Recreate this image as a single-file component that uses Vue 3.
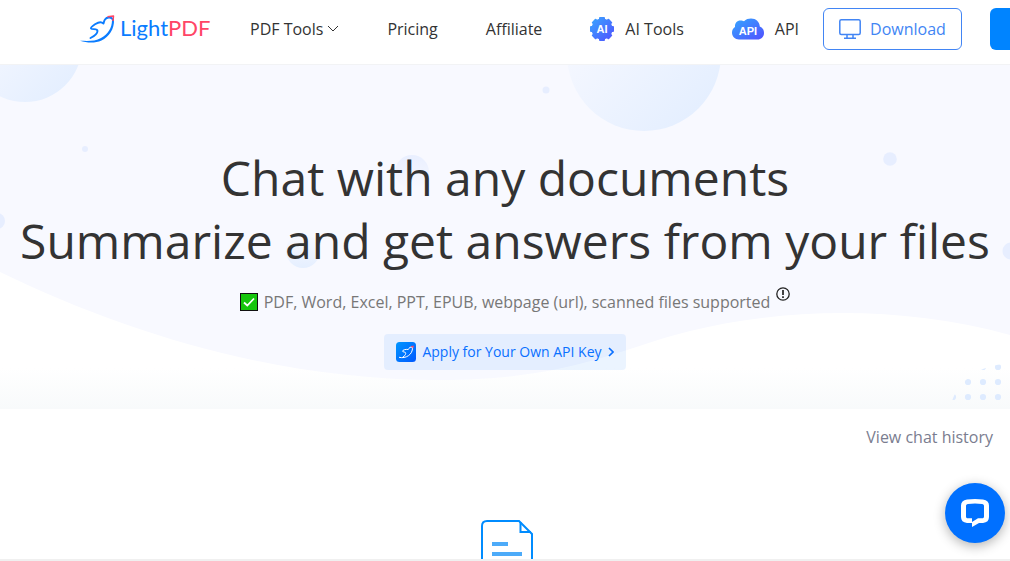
<script setup>
const links = [
  { label: 'Pricing' },
  { label: 'Affiliate' },
  { label: 'AI Tools', icon: 'ai' },
  { label: 'API', icon: 'api' },
]
const teeth = [0, 45, 90, 135, 180, 225, 270, 315]
</script>

<template>
  <div class="page">
    <header class="header">
      <a class="logo" href="#" aria-label="LightPDF">
        <svg width="36" height="30" viewBox="0 0 36 30" fill="none" aria-hidden="true">
          <path d="M0 26.800C8 27 15 27.500 21 24C28 20 32 14 32 6L34 5.500C34.500 15 29 23 21.500 26.500C15 29.500 7 29 0 26.800Z" fill="#0a7cff" />
          <path d="M33 6C32 3 27 2.500 25 5.500C24 7 24 8 23.500 9.500C21.500 7.500 18.500 8 15.500 10C13 11.700 10.500 13 11 14.500C12 16 17.500 14 17.500 17C17.500 20 14.500 22 10.500 24" stroke="#0a7cff" stroke-width="1.900" stroke-linecap="round" stroke-linejoin="round" />
          <path d="M27.500 2.800L33.500 2L33 7" stroke="#ff4566" stroke-width="1.500" stroke-linejoin="round" />
        </svg>
        <span class="wordmark">Light<span class="red">PDF</span></span>
      </a>
      <nav class="nav">
        <button class="tools" type="button">
          PDF Tools
          <svg width="12" height="8" viewBox="0 0 12 8" fill="none" stroke="#333" aria-hidden="true"><path d="M1 1L6 6L11 1" /></svg>
        </button>
        <a v-for="link in links" :key="link.label" class="link" href="#">
          <svg v-if="link.icon === 'ai'" width="24" height="24" viewBox="0 0 24 24" aria-hidden="true">
            <defs>
              <linearGradient id="gear" x1="0" y1="0" x2="1" y2="1"><stop stop-color="#38a8ff" /><stop offset="1" stop-color="#5050ff" /></linearGradient>
              <clipPath id="cog">
                <circle cx="12" cy="12" r="10.500" />
                <rect v-for="angle in teeth" :key="angle" x="9" y="0" width="6" height="6" rx="1" :transform="`rotate(${angle} 12 12)`" />
              </clipPath>
            </defs>
            <rect width="24" height="24" fill="url(#gear)" clip-path="url(#cog)" />
            <text x="12" y="16" class="badge">AI</text>
          </svg>
          <svg v-if="link.icon === 'api'" width="32" height="22" viewBox="0 0 32 22" aria-hidden="true">
            <defs><linearGradient id="cloud" x1="0" y1="0" x2="1" y2="1"><stop stop-color="#34a8ff" /><stop offset="1" stop-color="#5050ff" /></linearGradient></defs>
            <path fill="url(#cloud)" d="M7 21.500C3 21.500 0 18.500 0 14.500C0 12 1.200 10 3 9C2.700 5 5 2.500 8.500 2.500C10 2.500 11 2.800 12 3.300C14 1.200 16.500 0.500 19 0.500C24 0.500 27.500 4 27.800 8.500C30.500 9.500 32 12 32 15C32 19 29 21.500 25.500 21.500Z" />
            <text x="16" y="17" class="badge">API</text>
          </svg>
          {{ link.label }}
        </a>
      </nav>
      <a class="download" href="#">
        <svg width="22" height="20" viewBox="0 0 22 20" fill="none" stroke="#4285f4" stroke-width="1.500" aria-hidden="true">
          <rect x="0.800" y="0.800" width="20.400" height="14.600" rx="1.500" /><path d="M8 15.500V19M14 15.500V19M5 19.200H17" />
        </svg>
        Download
      </a>
      <button class="account" type="button" aria-label="Account"></button>
    </header>

    <main class="main">
      <section class="hero">
        <svg class="scene" viewBox="0 0 1010 344" preserveAspectRatio="xMidYMin slice" aria-hidden="true">
          <defs>
            <linearGradient id="orb" x1="0" y1="0" x2="1" y2="1"><stop offset="0.200" stop-color="#f6f8ff" /><stop offset="0.850" stop-color="#e5efff" /></linearGradient>
            <linearGradient id="orbDown" x1="0" y1="0" x2="0" y2="1"><stop stop-color="#f8f9ff" /><stop offset="1" stop-color="#e5efff" /></linearGradient>
            <linearGradient id="orbUp" x1="0" y1="1" x2="0" y2="0"><stop stop-color="#f8f9ff" /><stop offset="1" stop-color="#e9efff" /></linearGradient>
            <pattern id="dots" x="960" y="294" width="15" height="15" patternUnits="userSpaceOnUse"><circle cx="8" cy="8" r="3.100" fill="#deebff" /></pattern>
          </defs>
          <path fill="#f8f9ff" d="M0 0H1010V270C900 240 785 243 690 266C620 283 570 315 440 315C280 315 130 270 0 207Z" />
          <circle cx="25" cy="-20" r="57" fill="url(#orb)" />
          <circle cx="644" cy="-11" r="77" fill="url(#orb)" />
          <circle cx="412" cy="107" r="17" fill="url(#orbUp)" />
          <circle cx="303" cy="186" r="17" fill="url(#orbDown)" />
          <g fill="#e7eeff">
            <circle cx="85" cy="84" r="3" /><circle cx="546" cy="25" r="3.500" /><circle cx="890" cy="94" r="6.800" /><circle cx="-3" cy="156" r="8" /><circle cx="1011" cy="186" r="8.500" />
          </g>
          <path fill="url(#dots)" d="M1003 299C975 302 953 320 950 345H1003Z" />
        </svg>
        <h1 class="title">Chat with any documents<br />Summarize and get answers from your files</h1>
        <p class="formats">
          <svg width="18" height="18" viewBox="0 0 18 18" aria-hidden="true"><rect x="0.500" y="0.500" width="17" height="17" fill="#16c60c" stroke="#111" /><path d="M4 9.500L7.300 12.500L14 5.500" fill="none" stroke="#fff" stroke-width="1.800" /></svg>
          <span>PDF, Word, Excel, PPT, EPUB, webpage (url), scanned files supported</span>
          <svg class="info" width="14" height="14" viewBox="0 0 14 14" fill="none" stroke="#222" stroke-width="1.300" aria-hidden="true"><circle cx="7" cy="7" r="6.200" /><path d="M7 3V8M7 9.300V11" stroke-width="1.700" /></svg>
        </p>
        <a class="apply" href="#">
          <svg width="20" height="20" viewBox="0 0 20 20" fill="none" aria-hidden="true">
            <defs><linearGradient id="tile" x1="0" y1="0" x2="1" y2="1"><stop stop-color="#0096ff" /><stop offset="1" stop-color="#0058ff" /></linearGradient></defs>
            <rect width="20" height="20" rx="3.500" fill="url(#tile)" />
            <path d="M3 15.300C10 17 16.800 12.500 16.500 5.500C14.500 4.500 13 5.700 12.300 7.500C9.500 7 6.500 8 6.500 9.300C6.500 10.200 9.800 9.500 9.700 11.300C9.600 13 8.500 14 6.800 15" stroke="#fff" />
            <path d="M15 4.700L17.300 4L16.800 6.300" stroke="#ff4566" />
          </svg>
          <span>Apply for Your Own API Key</span>
          <svg width="6" height="10" viewBox="0 0 6 10" fill="none" stroke="#0a70ff" stroke-width="1.600" aria-hidden="true"><path d="M1 1L5 5L1 9" /></svg>
        </a>
      </section>

      <section class="work">
        <a class="history" href="#">View chat history</a>
        <svg class="doc" width="52" height="64" viewBox="0 0 52 64" fill="none" aria-hidden="true">
          <path d="M1 64V6C1 3 3 1 6 1H38L51 14V64" stroke="#008cff" stroke-width="2" />
          <path d="M39.500 2V12H50" stroke="#008cff" stroke-width="2" />
          <path d="M11 24H27M11 34H41" stroke="#4dabf9" stroke-width="4" />
        </svg>
      </section>
    </main>

    <button class="chat" type="button" aria-label="Open chat">
      <svg width="28" height="28" viewBox="0 0 28 28" aria-hidden="true">
        <path fill="#fff" fill-rule="evenodd" d="M6 0.500Q14 -0.500 22 0.500C26 1 28 3 28 6.500V18C28 21.500 26 23.500 22 24H18L11 28V24H6C2 23.500 0 21.500 0 18V6.500C0 3 2 1 6 0.500ZM7 5C5.500 5.200 5 6 5 7V17.500C5 18.700 5.500 19.300 7 19.300H11V23L17 19.300H21C22.500 19.300 23 18.700 23 17.500V7C23 6 22.500 5.200 21 5Q14 4 7 5Z" />
      </svg>
    </button>
  </div>
</template>

<style>
body { margin: 0; }
</style>

<style scoped>
.page {
  display: flex;
  flex-direction: column;
  height: 100vh;
  overflow: hidden;
  box-sizing: border-box;
  border-bottom: 2px solid #f0f0f0;
  background: #fff;
  color: #333;
  font-family: "Open Sans", "Noto Sans", sans-serif;
  font-size: 16px;
}
a { color: inherit; text-decoration: none; }
button { border: 0; padding: 0; font: inherit; color: inherit; cursor: pointer; }
svg { flex: none; }
.header {
  display: flex;
  flex: none;
  align-items: center;
  padding: 8px 0 14px 80px;
  border-bottom: 1px solid #f2f3f5;
  white-space: nowrap;
  overflow: hidden;
}
.logo { display: flex; align-items: center; gap: 4px; width: 130px; margin-right: 40px; flex: none; }
.wordmark { font-family: Lato, sans-serif; font-size: 22px; line-height: 24px; padding-bottom: 2px; color: #0a7cff; }
.red { color: #ff4566; }
.nav { display: flex; align-items: center; gap: 48px; flex: none; }
.tools { display: flex; align-items: center; gap: 4px; background: none; }
.link { display: flex; align-items: center; gap: 11px; }
.badge { fill: #fff; font-family: "Liberation Sans", sans-serif; font-size: 11px; font-weight: 700; text-anchor: middle; }
.download {
  display: flex;
  align-items: center;
  gap: 9px;
  flex: none;
  box-sizing: border-box;
  height: 42px;
  margin-left: 24px;
  padding: 0 15px;
  border: 1px solid #4285f4;
  border-radius: 6px;
  color: #4285f4;
}
.account { flex: none; width: 120px; height: 42px; margin-left: 28px; border-radius: 6px; background: #0084ff; }
.main { display: flex; flex: 1; flex-direction: column; min-height: 0; }
.hero {
  position: relative;
  display: flex;
  flex: none;
  flex-direction: column;
  align-items: center;
  padding: 81px 0 39px;
  background: linear-gradient(#fff 88%, #f8fafb);
  overflow: hidden;
}
.scene { position: absolute; inset: 0; width: 100%; height: 100%; }
.title { position: relative; margin: 0; font-size: 48px; line-height: 63px; font-weight: 400; text-align: center; }
.formats { position: relative; display: flex; align-items: center; gap: 6px; margin: 18px 0 20px; line-height: 24px; color: #777; }
.info { position: absolute; left: 100%; top: -3px; margin-left: 6px; }
.apply {
  position: relative;
  display: flex;
  align-items: center;
  gap: 6px;
  height: 36px;
  padding: 0 12px;
  border-radius: 4px;
  background: rgba(0, 112, 255, 0.08);
  color: #0a70ff;
  font-size: 14px;
  line-height: 20px;
}
.work { display: flex; flex: 1; flex-direction: column; align-items: center; min-height: 0; padding: 16px 17px 0; overflow: hidden; }
.history { align-self: flex-end; line-height: 24px; color: #7a7d8f; }
.doc { margin: 71px 0 0 4px; }
.chat {
  position: fixed;
  right: 5px;
  bottom: 18px;
  display: flex;
  align-items: center;
  justify-content: center;
  width: 60px;
  height: 60px;
  border-radius: 50%;
  background: #0070ff;
  box-shadow: 0 3px 12px rgba(0, 0, 0, 0.3);
}
</style>
